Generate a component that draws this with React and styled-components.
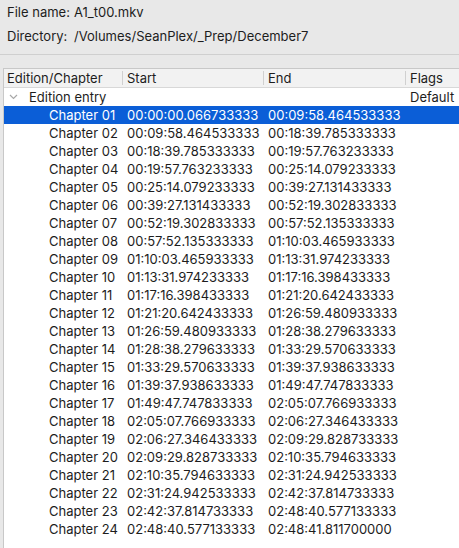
import React from 'react';
import styled, { createGlobalStyle } from 'styled-components';

const GlobalStyle = createGlobalStyle`
  html, body { margin: 0; padding: 0; }
  body {
    background: #e8e8e8;
    font-family: Inter, "Liberation Sans", sans-serif;
    font-size: 13px;
    color: #1d1d1d;
  }
`;

export const Page = styled.div`
  width: 459px;
  height: 548px;
  overflow: hidden;
  background: #e8e8e8;
`;

export const InfoBlock = styled.div`
  padding: 4px 0 0 7px;
  height: 50px;
  border-bottom: 1px solid #cfcfcf;
`;

export const InfoRow = styled.div`
  display: grid;
  grid-template-columns: 67px 1fr;
  height: 24px;
  line-height: 16px;
`;

export const Table = styled.div`
  margin: 13px 0 0 3px;
  border-top: 1px solid #c8c8c8;
  border-left: 1px solid #c8c8c8;
  background: #fff;
  height: 600px;
`;

export const HeaderRow = styled.div`
  display: grid;
  grid-template-columns: 118px 141px 142px 1fr;
  height: 18px;
  align-items: center;
  background: #f2f2f2;
  border-bottom: 1px solid #d8d8d8;
`;

export const HeaderCell = styled.div`
  padding-left: ${p => (p.$first ? '3px' : '4px')};
  border-left: ${p => (p.$first ? 'none' : '1px solid #d0d0d0')};
  height: 14px;
  line-height: 15px;
  white-space: nowrap;
`;

export const Row = styled.div`
  display: grid;
  grid-template-columns: 118px 141px 142px 1fr;
  height: 18px;
  line-height: 18px;
  background: ${p => (p.$selected ? '#0b5ed7' : 'transparent')};
  color: ${p => (p.$selected ? '#fff' : '#1d1d1d')};
  white-space: nowrap;
`;

export const Cell = styled.div`
  padding-left: ${p => p.$indent || '4px'};
  display: flex;
  align-items: center;
  overflow: hidden;
`;

export const Chevron = styled.svg`
  width: 9px;
  height: 6px;
  margin: 0 11px 0 5px;
`;

const chapters = [
  ['00:00:00.066733333', '00:09:58.464533333'],
  ['00:09:58.464533333', '00:18:39.785333333'],
  ['00:18:39.785333333', '00:19:57.763233333'],
  ['00:19:57.763233333', '00:25:14.079233333'],
  ['00:25:14.079233333', '00:39:27.131433333'],
  ['00:39:27.131433333', '00:52:19.302833333'],
  ['00:52:19.302833333', '00:57:52.135333333'],
  ['00:57:52.135333333', '01:10:03.465933333'],
  ['01:10:03.465933333', '01:13:31.974233333'],
  ['01:13:31.974233333', '01:17:16.398433333'],
  ['01:17:16.398433333', '01:21:20.642433333'],
  ['01:21:20.642433333', '01:26:59.480933333'],
  ['01:26:59.480933333', '01:28:38.279633333'],
  ['01:28:38.279633333', '01:33:29.570633333'],
  ['01:33:29.570633333', '01:39:37.938633333'],
  ['01:39:37.938633333', '01:49:47.747833333'],
  ['01:49:47.747833333', '02:05:07.766933333'],
  ['02:05:07.766933333', '02:06:27.346433333'],
  ['02:06:27.346433333', '02:09:29.828733333'],
  ['02:09:29.828733333', '02:10:35.794633333'],
  ['02:10:35.794633333', '02:31:24.942533333'],
  ['02:31:24.942533333', '02:42:37.814733333'],
  ['02:42:37.814733333', '02:48:40.577133333'],
  ['02:48:40.577133333', '02:48:41.811700000'],
];

const App = () => {
  return (
    <Page>
      <GlobalStyle />
      <InfoBlock>
        <InfoRow><span>File name:</span><span>A1_t00.mkv</span></InfoRow>
        <InfoRow><span>Directory:</span><span>/Volumes/SeanPlex/_Prep/December7</span></InfoRow>
      </InfoBlock>
      <Table>
        <HeaderRow>
          <HeaderCell $first>Edition/Chapter</HeaderCell>
          <HeaderCell>Start</HeaderCell>
          <HeaderCell>End</HeaderCell>
          <HeaderCell>Flags</HeaderCell>
        </HeaderRow>
        <Row>
          <Cell $indent="0px">
            <Chevron viewBox="0 0 9 6">
              <path d="M1 1 L4.5 4.5 L8 1" fill="none" stroke="#a8a8a8" strokeWidth="1.2" />
            </Chevron>
            Edition entry
          </Cell>
          <Cell />
          <Cell />
          <Cell $indent="5px">Default</Cell>
        </Row>
        {chapters.map((c, i) => (
          <Row key={i} $selected={i === 0}>
            <Cell $indent="45px">Chapter {String(i + 1).padStart(2, '0')}</Cell>
            <Cell $indent="5px">{c[0]}</Cell>
            <Cell $indent="5px">{c[1]}</Cell>
            <Cell />
          </Row>
        ))}
      </Table>
    </Page>
  );
};

export default App;
